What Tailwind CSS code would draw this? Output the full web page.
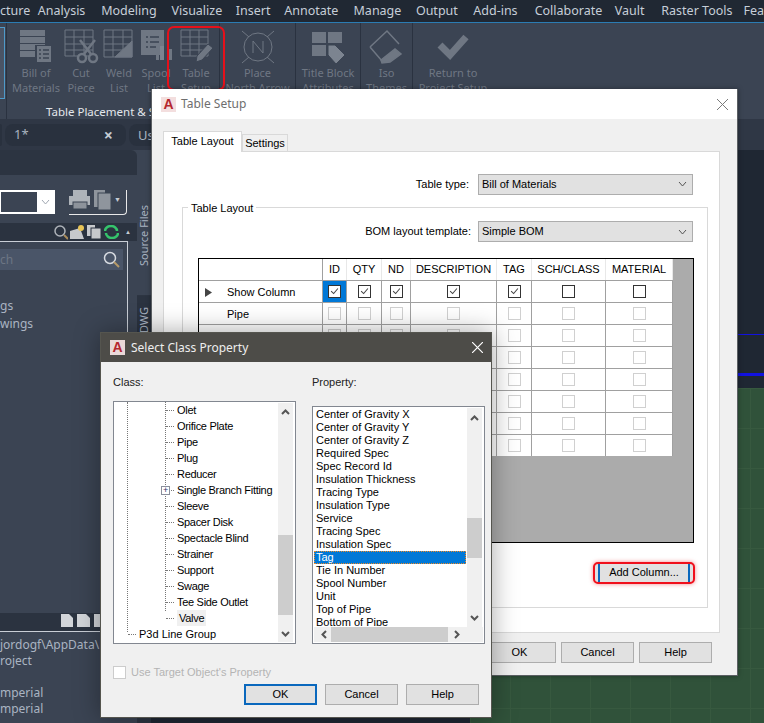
<!DOCTYPE html>
<html lang="en">
<head>
    <meta charset="UTF-8">
    <title>Table Setup</title>
    <script src="https://cdn.jsdelivr.net/npm/@tailwindcss/browser@4"></script>
</head>
<body class="bg-[#1f2733]">
<div class="relative w-[764px] h-[723px] overflow-hidden font-['Liberation_Sans',sans-serif] text-[11px] bg-[#1f2733]">

    <!-- menu bar -->
    <nav class="h-[22px] bg-[#202833] flex items-center text-[#c6ced8] text-[12.5px] font-['Noto_Sans',sans-serif] whitespace-nowrap">
        <span class="w-[38px] text-right pr-[20px] overflow-hidden">cture</span>
        <span class="w-[64px]">Analysis</span>
        <span class="w-[71px]">Modeling</span>
        <span class="w-[65px]">Visualize</span>
        <span class="w-[49px]">Insert</span>
        <span class="w-[70px]">Annotate</span>
        <span class="w-[63px]">Manage</span>
        <span class="w-[58px]">Output</span>
        <span class="w-[62px]">Add-ins</span>
        <span class="w-[81px]">Collaborate</span>
        <span class="w-[47px]">Vault</span>
        <span class="w-[83px]">Raster Tools</span>
        <span>Fea</span>
    </nav>
    <div class="h-px bg-[#2b7cb3]"></div>

    <!-- ribbon -->
    <div class="h-[96px] bg-[#3b4453] flex text-[#6f7783] text-[11px] leading-[15px] font-['Noto_Sans',sans-serif] text-center">
        <div class="w-[5px] h-[72px] mt-[4px] bg-[#4a5465] border border-l-0 border-[#4f9ac9]"></div>
        <div class="w-px ml-[1px] bg-[#2a3240]"></div>
        <div class="w-[212px] flex pl-[5px] pt-[6px] relative">
            <div class="w-[48px]">
                <svg class="mx-auto" width="40" height="36" viewBox="0 0 40 36" fill="#6f7783"><rect x="4" y="1" width="25" height="6"/><rect x="4" y="8" width="25" height="6"/><rect x="4" y="15" width="25" height="6"/><rect x="4" y="22" width="25" height="6"/><rect x="19" y="16" width="17" height="17" fill="#3b4453"/><rect x="21" y="17" width="14" height="16"/><path d="M23 21h2M27 21h6M23 25h2M27 25h6M23 29h2M27 29h6" stroke="#3b4453" stroke-width="1.5"/></svg>
                <div>Bill of<br>Materials</div>
            </div>
            <div class="w-[42px]">
                <svg class="mx-auto" width="38" height="36" viewBox="0 0 38 36" fill="none" stroke="#6f7783"><path d="M3 1h28v26H3zM3 8h28M3 15h28M3 21h28M12 1v26M22 1v26"/><g stroke-width="2.5"><circle cx="20" cy="29" r="4" fill="#3b4453"/><circle cx="31" cy="29" r="4" fill="#3b4453"/><path d="M22 25l11-14M29 25L18 11"/></g></svg>
                <div>Cut<br>Piece</div>
            </div>
            <div class="w-[34px]">
                <svg class="mx-auto" width="34" height="36" viewBox="0 0 34 36" fill="none" stroke="#6f7783"><path d="M2 1h28v27H2zM2 8h28M2 15h28M2 21h28M11 1v27M21 1v27"/><path d="M13 28l17-16v16z" fill="#6f7783"/></svg>
                <div>Weld<br>List</div>
            </div>
            <div class="w-[40px]">
                <svg class="mx-auto" width="36" height="36" viewBox="0 0 36 36" fill="#6f7783"><rect x="3" y="1" width="23" height="25"/><path d="M8 8h2M12 8h9M8 13h2M12 13h9M8 18h2M12 18h6" stroke="#3b4453" stroke-width="1.5"/><rect x="18" y="17" width="3" height="14"/><rect x="24" y="19" width="3" height="11" fill="#3b4453"/><rect x="22" y="17" width="4" height="14" fill="#7c8490"/><rect x="29" y="20" width="5" height="11"/></svg>
                <div>Spool<br>List</div>
            </div>
            <div class="w-[40px]">
                <svg class="mx-auto" width="36" height="36" viewBox="0 0 36 36" fill="none" stroke="#6f7783"><path d="M3 1h27v26H3zM3 8h27M3 15h27M3 21h27M12 1v26M21 1v26"/><path d="M18 33l1-6 11-12 5 4-11 12z" fill="#6f7783" stroke="#3b4453"/></svg>
                <div>Table<br>Setup</div>
            </div>
        </div>
        <div class="w-px bg-[#2a3240]"></div>
        <div class="w-[75px] pt-[6px]">
            <svg class="mx-auto" width="40" height="36" viewBox="0 0 40 36" fill="none" stroke="#6f7783"><circle cx="20" cy="18" r="14"/><path d="M4 2l7 6M36 2l-7 6M4 34l7-6M36 34l-7-6M15 24V12l10 12V12"/></svg>
            <div class="whitespace-nowrap">Place<br>North Arrow</div>
        </div>
        <div class="w-px bg-[#2a3240]"></div>
        <div class="w-[64px] pt-[6px]">
            <svg class="mx-auto" width="36" height="36" viewBox="0 0 36 36" fill="#6f7783"><rect x="2" y="3" width="14" height="11"/><rect x="18" y="3" width="14" height="11"/><rect x="2" y="16" width="14" height="11"/><path d="M18 16h7l10 10-9 9-8-9z" fill="#7c8490" stroke="#3b4453"/></svg>
            <div class="whitespace-nowrap">Title Block<br>Attributes</div>
        </div>
        <div class="w-px bg-[#2a3240]"></div>
        <div class="w-[51px] pt-[6px]">
            <svg class="mx-auto" width="40" height="36" viewBox="0 0 40 36" fill="none" stroke="#6f7783" stroke-width="1.5"><path d="M3 18L20 2l12 13M3 18l12 14"/><path d="M14 31l14-11 6 5-11 8-8 1z" fill="#6f7783"/></svg>
            <div>Iso<br>Themes</div>
        </div>
        <div class="w-px bg-[#2a3240]"></div>
        <div class="w-[80px] pt-[6px]">
            <svg class="mx-auto" width="36" height="36" viewBox="0 0 36 36" fill="none" stroke="#6f7783" stroke-width="7"><path d="M5 16l10 10L31 8"/></svg>
            <div class="whitespace-nowrap">Return to<br>Project Setup</div>
        </div>
    </div>

    <!-- ribbon group title, sits over the ribbon's bottom edge -->
    <div class="absolute left-[46px] top-[103px] text-[#e3e7ec] text-[11.5px] font-['Noto_Sans',sans-serif] whitespace-nowrap">Table Placement &amp; S</div>
    <!-- red callout -->
    <div class="absolute left-[167px] top-[26px] w-[58px] h-[65px] rounded-[7px] border-2 border-[#e6101a]"></div>

    <!-- drawing tabs -->
    <div class="h-[31px] bg-[#2f3745] flex pt-[5px] gap-[3px] text-[#a9b4c0] text-[13px] font-['Noto_Sans',sans-serif]">
        <div class="w-[2px] h-[22px] bg-[#29313e] rounded-r-lg"></div>
        <div class="w-[121px] h-[22px] bg-[#29313e] rounded-lg flex items-center justify-between pl-[9px] pr-[13px]"><span>1*</span><span class="text-[16px] font-bold text-[#c5ccd4]">×</span></div>
        <div class="w-[60px] h-[22px] bg-[#29313e] rounded-lg pl-[9px] leading-[22px]">Us</div>
    </div>

    <!-- side panel -->
    <div class="absolute left-0 top-[150px] w-[137px] h-[573px] overflow-hidden bg-[#3b4453] text-[#aab4c2] font-['Noto_Sans',sans-serif]">
        <div class="h-[25px] bg-[#2c3441] rounded-tr-md"></div>
        <div class="flex mt-[15px] h-[24px]">
            <div class="w-[55px] h-[24px] bg-white border border-white border-y-2 flex">
                <div class="w-[36px] bg-[#3b4453]"></div>
                <div class="w-[17px] flex items-center justify-center"><svg width="9" height="6" viewBox="0 0 9 6" fill="none" stroke="#a1a8b2"><path d="M1 1l3.500 4L8 1"/></svg></div>
            </div>
            <div class="ml-[14px] w-[58px] h-[25px] border-b border-r border-[#e8e8e8] rounded-br-sm flex gap-[3px] items-start">
                <svg width="22" height="20" viewBox="0 0 22 20" fill="#aeb3b9"><rect x="4" y="0" width="14" height="6"/><rect x="0" y="6" width="21" height="9"/><rect x="4" y="12" width="14" height="7" fill="#8d939b" stroke="#3b4453"/></svg>
                <svg width="17" height="20" viewBox="0 0 17 20" fill="#8f959d"><rect x="0" y="0" width="11" height="17"/><rect x="4" y="3" width="13" height="17" stroke="#3b4453"/></svg>
                <span class="text-[7px] text-[#c6ccd3] mt-[5px]">▼</span>
            </div>
        </div>
        <div class="h-[18px] mt-[9px] bg-[#2b3340] flex items-center justify-end gap-[2px] pr-[6px]">
            <svg width="14" height="15" viewBox="0 0 14 15" fill="none"><circle cx="6" cy="6" r="5" stroke="#aeb3b9" stroke-width="1.500"/><path d="M10 10l4 4" stroke="#a98b5a" stroke-width="2"/></svg>
            <svg width="15" height="14" viewBox="0 0 15 14"><path d="M0 6l10-3 4 11H0z" fill="#c7c9cc"/><circle cx="11" cy="3" r="3" fill="#e8c456"/></svg>
            <svg width="15" height="14" viewBox="0 0 15 14" fill="#c7c9cc"><rect x="0" y="0" width="8" height="11"/><rect x="4" y="3" width="10" height="11" stroke="#2b3340"/></svg>
            <svg width="15" height="14" viewBox="0 0 15 14" fill="none" stroke="#35c46c" stroke-width="2.500"><path d="M1 6a6 5 0 0 1 12 0M14 8a6 5 0 0 1-12 0"/></svg>
            <span class="text-[6px] ml-[4px] text-[#c6ccd3]">▲</span>
        </div>
        <div class="h-[372px] w-[128px] border-t border-r border-[#c9ced6] pt-[7px] pr-[4px]">
            <div class="h-[21px] bg-[#4a5568] flex justify-between items-center text-[#6d7684] text-[12px] pr-[3px]">
                <span>ch</span>
                <svg width="17" height="17" viewBox="0 0 17 17" fill="none"><circle cx="7" cy="7" r="5.500" stroke="#d6dae0" stroke-width="1.500"/><path d="M11 11l5 5" stroke="#b69a68" stroke-width="2"/></svg>
            </div>
            <div class="mt-[27px] text-[12px] leading-[18px]">gs<br>wings</div>
        </div>
        <div class="h-[18px] bg-[#2b3340] flex gap-[2px] pl-[60px] border-b border-[#c9ced6] box-content">
            <svg width="14" height="15" viewBox="0 0 14 15" fill="#d2d5d9"><path d="M1 1h8l4 4v9H1z"/></svg>
            <svg width="15" height="15" viewBox="0 0 15 15" fill="#d2d5d9"><path d="M1 1h9l4 4v9H1z"/></svg>
            <svg width="14" height="15" viewBox="0 0 14 15" fill="#d2d5d9"><path d="M1 1h12v13H1z"/></svg>
        </div>
        <div class="mt-[5px] text-[12px] leading-[16px] whitespace-nowrap">
            <div>jordogf\AppData\F</div>
            <div>roject</div>
            <div class="mt-[16px]">mperial</div>
            <div>mperial</div>
        </div>
    </div>

    <!-- sidebar tabs -->
    <div class="absolute left-[137px] top-[150px] w-[14px] h-[573px] bg-[#2d3542]">
        <div class="h-[145px] bg-[#3b4453] pt-[55px] text-[#aab4c2] text-[11px] font-['Noto_Sans',sans-serif]">
            <div class="[writing-mode:vertical-rl] rotate-180 leading-[14px]">Source Files</div>
        </div>
        <div class="h-[40px] mt-[1px] bg-[#2b3340] text-[#aab4c2] text-[11px] pt-[11px] font-['Noto_Sans',sans-serif]">
            <div class="[writing-mode:vertical-rl] rotate-180 leading-[14px]">DWG</div>
        </div>
    </div>

    <!-- model space behind the dialogs -->
    <div class="absolute left-[737px] top-[334px] w-[27px] h-px bg-[#1212e0]"></div>
    <div class="absolute left-[737px] top-[373px] w-[27px] h-[3px] bg-[#1212e0]"></div>
    <div class="absolute left-[470px] top-[388px] w-[294px] h-[335px] bg-[#30523a] bg-[linear-gradient(#37593f_1px,transparent_1px),linear-gradient(90deg,#37593f_1px,transparent_1px)] bg-[size:40px_40px]"></div>

    <!-- Table Setup dialog -->
    <section class="absolute left-[151px] top-[89px] w-[587px] h-[587px] bg-[#f0f0f0] border border-[#5b5f63] border-t-0 flex flex-col shadow-[0_0_5px_rgba(0,0,0,0.35)]">
        <header class="h-[30px] bg-white flex items-center pl-[9px] pr-[9px] text-[#6e6e6e] text-[12px] font-['Noto_Sans',sans-serif]">
            <span class="w-[15px] h-[15px] bg-[#f3dede] text-[#b5262e] font-bold text-[14px] leading-[15px] text-center font-['Liberation_Sans',sans-serif]">A</span>
            <span class="ml-[5px] flex-1">Table Setup</span>
            <svg width="11" height="11" viewBox="0 0 11 11" stroke="#7a7a7a" fill="none"><path d="M0 0l11 11M11 0L0 11"/></svg>
        </header>
        <div class="flex-1 px-[11px] pt-[12px] text-black">
            <div class="flex items-end h-[21px] relative z-10">
                <div class="w-[79px] h-[21px] bg-white border border-b-0 border-[#d9d9d9] text-center leading-[19px]">Table Layout</div>
                <div class="w-[46px] h-[18px] bg-[#f0f0f0] border border-[#d9d9d9] text-center leading-[17px]">Settings</div>
            </div>
            <div class="h-[482px] w-[557px] -mt-px bg-white border border-[#d9d9d9] pl-[18px] pr-[11px]">
                <div class="flex justify-end items-center h-[20px] mt-[22px] pr-[15px]">
                    <span class="mr-[9px]">Table type:</span>
                    <div class="w-[215px] h-[21px] bg-[#e1e1e1] border border-[#adadad] flex justify-between items-center pl-[3px] pr-[5px]">Bill of Materials
                        <svg width="9" height="6" viewBox="0 0 9 6" fill="none" stroke="#555"><path d="M1 1l3.500 4L8 1"/></svg>
                    </div>
                </div>
                <div class="h-[401px] mt-[13px] border border-[#d9d9d9] pl-[15px] pr-[14px] relative">
                    <span class="absolute left-[5px] -top-[8px] bg-white px-[3px]">Table Layout</span>
                    <div class="flex justify-end items-center h-[21px] mt-[13px]">
                        <span class="mr-[7px]">BOM layout template:</span>
                        <div class="w-[215px] h-[21px] bg-[#e1e1e1] border border-[#adadad] flex justify-between items-center pl-[3px] pr-[5px]">Simple BOM
                            <svg width="9" height="6" viewBox="0 0 9 6" fill="none" stroke="#555"><path d="M1 1l3.500 4L8 1"/></svg>
                        </div>
                    </div>
                    <div id="bom-grid" class="mt-[16px] h-[285px] w-[496px] border border-black bg-[#ababab]"></div>
                    <!-- Add Column + callout -->
                    <div class="flex justify-end mt-[19px] -mr-[2px]">
                        <div class="w-[102px] h-[22px] rounded-[5px] border-2 border-[#f0101c] shadow-[0_0_4px_rgba(230,20,30,0.5)] bg-[#e1e1e1] flex items-center justify-center">
                            <div class="w-[92px] h-[18px] border-x-2 border-[#0a68bd] text-center leading-[17px]">Add Column...</div>
                        </div>
                    </div>
                </div>
            </div>
            <div class="flex justify-end gap-[5px] mt-[9px] pr-[14px]">
                <button class="w-[73px] h-[21px] bg-[#e1e1e1] border border-[#adadad] ml-[-10px]">OK</button>
                <button class="w-[73px] h-[21px] bg-[#e1e1e1] border border-[#adadad]">Cancel</button>
                <button class="w-[73px] h-[21px] bg-[#e1e1e1] border border-[#adadad]">Help</button>
            </div>
        </div>
    </section>

    <!-- Select Class Property dialog -->
    <section class="absolute left-[100px] top-[332px] w-[392px] h-[386px] bg-[#f0f0f0] border border-[#55554f] flex flex-col shadow-[0_0_24px_rgba(0,0,0,0.35)]">
        <header class="h-[29px] bg-[#4d4c48] flex items-center pl-[9px] pr-[8px] text-[#eeeeee] text-[12px] font-['Noto_Sans',sans-serif]">
            <span class="w-[15px] h-[15px] bg-[#e9d8d8] text-[#b5262e] font-bold text-[14px] leading-[15px] text-center font-['Liberation_Sans',sans-serif]">A</span>
            <span class="ml-[6px] flex-1">Select Class Property</span>
            <svg width="11" height="11" viewBox="0 0 11 11" stroke="#ffffff" fill="none" stroke-width="1.200"><path d="M0 0l11 11M11 0L0 11"/></svg>
        </header>
        <div class="flex pl-[12px] pt-[12px] gap-[16px]">
            <div class="w-[183px]">
                <div class="h-[27px] text-[#222]">Class:</div>
                <div class="h-[243px] bg-white border border-[#828790] flex justify-between pr-[2px]">
                    <div id="class-tree" class="relative w-[163px] overflow-hidden"></div>
                    <div class="w-[15px] my-[1px] bg-[#f0f0f0] flex flex-col items-center justify-between">
                        <svg class="mt-[6px]" width="9" height="6" viewBox="0 0 9 6" fill="none" stroke="#555" stroke-width="2"><path d="M1 5l3.500-3.500L8 5"/></svg>
                        <div class="w-full h-[80px] mt-[104px] bg-[#cdcdcd]"></div>
                        <svg class="mb-[5px]" width="9" height="6" viewBox="0 0 9 6" fill="none" stroke="#555" stroke-width="2"><path d="M1 1l3.500 3.500L8 1"/></svg>
                    </div>
                </div>
            </div>
            <div class="w-[173px]">
                <div class="h-[32px] text-[#222]">Property:</div>
                <div class="relative h-[238px] bg-white border border-[#828790] pl-[1px] pt-[1px] overflow-hidden">
                    <div id="property-list" class="w-[152px] h-[218px] overflow-hidden"></div>
                    <!-- list scrollbars -->
                    <div class="absolute right-[2px] top-[1px] w-[15px] h-[220px] bg-[#f0f0f0] flex flex-col items-center">
                        <svg class="mt-[7px]" width="9" height="6" viewBox="0 0 9 6" fill="none" stroke="#555" stroke-width="2"><path d="M1 5l3.500-3.500L8 5"/></svg>
                        <div class="w-full h-[40px] mt-[97px] bg-[#cdcdcd]"></div>
                        <svg class="mt-[57px]" width="9" height="6" viewBox="0 0 9 6" fill="none" stroke="#555" stroke-width="2"><path d="M1 1l3.500 3.500L8 1"/></svg>
                    </div>
                    <div class="absolute left-[1px] right-[1px] bottom-[1px] h-[15px] bg-[#f0f0f0] flex items-center pl-[7px]">
                        <svg width="6" height="9" viewBox="0 0 6 9" fill="none" stroke="#555" stroke-width="2"><path d="M5 1L1.500 4.500 5 8"/></svg>
                        <div class="w-[117px] h-[15px] ml-[4px] bg-[#cdcdcd]"></div>
                        <svg class="ml-[6px]" width="6" height="9" viewBox="0 0 6 9" fill="none" stroke="#555" stroke-width="2"><path d="M1 1l3.500 3.500L1 8"/></svg>
                    </div>
                </div>
            </div>
        </div>
        <div class="flex items-center h-[13px] ml-[12px] mt-[22px] text-[#b4b4b4]">
            <span class="w-[13px] h-[13px] bg-white border border-[#cccccc]"></span>
            <span class="ml-[5px]">Use Target Object's Property</span>
        </div>
        <div class="flex gap-[8px] ml-[143px] mt-[5px]">
            <button class="w-[73px] h-[21px] bg-[#e1e1e1] border-2 border-[#0a68bd]">OK</button>
            <button class="w-[73px] h-[21px] bg-[#e1e1e1] border border-[#adadad]">Cancel</button>
            <button class="w-[73px] h-[21px] bg-[#e1e1e1] border border-[#adadad]">Help</button>
        </div>
    </section>
</div>

<script>
    // BOM grid: header row + 8 rows of checkboxes
    const columns = [['ID', 24], ['QTY', 35], ['ND', 29], ['DESCRIPTION', 86], ['TAG', 35], ['SCH/CLASS', 74], ['MATERIAL', 67]];
    const rowNames = ['Show Column', 'Pipe', '', '', '', '', '', ''];
    const checkedCols = ['ID', 'QTY', 'ND', 'DESCRIPTION', 'TAG'];
    const checkMark = '<svg class="w-full h-full" viewBox="0 0 13 13" fill="none" stroke="#444" stroke-width="1.200"><path d="M2.500 6l3 3 5-6"/></svg>';

    let grid = '<div class="flex h-[21px]"><div class="w-[124px] bg-white border-r border-[#a0a0a0]"></div>';
    columns.forEach(([name, w]) => {
        grid += `<div class="bg-white border-r border-[#e8e8e8] text-center leading-[20px] whitespace-nowrap" style="width:${w}px">${name}</div>`;
    });
    grid += '</div>';
    rowNames.forEach((rowName, r) => {
        grid += '<div class="flex h-[22px]">';
        grid += `<div class="w-[124px] bg-white border-t border-r border-[#a0a0a0] flex items-center pl-[6px] pt-[2px]"><span class="w-[22px]">${r === 0 ? '<svg width="7" height="9" viewBox="0 0 7 9" fill="#444"><path d="M0 0l7 4.500L0 9z"/></svg>' : ''}</span>${rowName}</div>`;
        columns.forEach(([name, w]) => {
            const active = r === 0;
            const selected = active && name === 'ID';
            const box = active ? 'border-[#333333] bg-white' : 'border-[#d0d0d0] bg-white';
            const inner = active && checkedCols.includes(name) ? checkMark : '';
            grid += `<div class="${selected ? 'bg-[#0078d7]' : 'bg-white'} border-t border-r border-[#a0a0a0] flex items-center justify-center" style="width:${w}px"><span class="block w-[13px] h-[13px] border ${box}">${inner}</span></div>`;
        });
        grid += '</div>';
    });
    document.getElementById('bom-grid').innerHTML = grid;

    // class tree rows
    const classes = ['Olet', 'Orifice Plate', 'Pipe', 'Plug', 'Reducer', 'Single Branch Fitting', 'Sleeve', 'Spacer Disk', 'Spectacle Blind', 'Strainer', 'Support', 'Swage', 'Tee Side Outlet', 'Valve'];
    const tree = document.getElementById('class-tree');
    let treeHtml = '<div class="absolute left-[13px] top-0 h-[230px] border-l border-dotted border-[#777]"></div><div class="absolute left-[51px] top-0 h-[209px] border-l border-dotted border-[#777]"></div>';
    classes.forEach(name => {
        const plus = name === 'Single Branch Fitting'
            ? '<span class="absolute left-[47px] w-[9px] h-[9px] border border-[#8a8f9c] bg-white text-[9px] leading-[7px] text-center text-[#336]">+</span>' : '';
        const label = name === 'Valve' ? 'bg-[#f0f0f0] px-[2px] -ml-[2px]' : '';
        treeHtml += `<div class="relative h-[16px] flex items-center pl-[52px] whitespace-nowrap tracking-[-0.3px]">${plus}<span class="w-[8px] shrink-0 border-t border-dotted border-[#777] mr-[2px]"></span><span class="ml-[1px] ${label}">${name}</span></div>`;
    });
    treeHtml += '<div class="relative h-[16px] flex items-center pl-[14px] whitespace-nowrap"><span class="w-[8px] shrink-0 border-t border-dotted border-[#777] mr-[3px]"></span><span>P3d Line Group</span></div>';
    tree.innerHTML = treeHtml;

    // property list rows
    const properties = ['Center of Gravity X', 'Center of Gravity Y', 'Center of Gravity Z', 'Required Spec', 'Spec Record Id', 'Insulation Thickness', 'Tracing Type', 'Insulation Type', 'Service', 'Tracing Spec', 'Insulation Spec', 'Tag', 'Tie In Number', 'Spool Number', 'Unit', 'Top of Pipe', 'Bottom of Pipe'];
    document.getElementById('property-list').innerHTML = properties.map(name => {
        const rowClass = name === 'Tag' ? 'bg-[#0078d7] text-white border border-dotted border-[#f08a24] leading-[11px] pl-px' : 'leading-[13px] pl-[2px]';
        return `<div class="h-[13px] whitespace-nowrap ${rowClass}">${name}</div>`;
    }).join('');
</script>
</body>
</html>
